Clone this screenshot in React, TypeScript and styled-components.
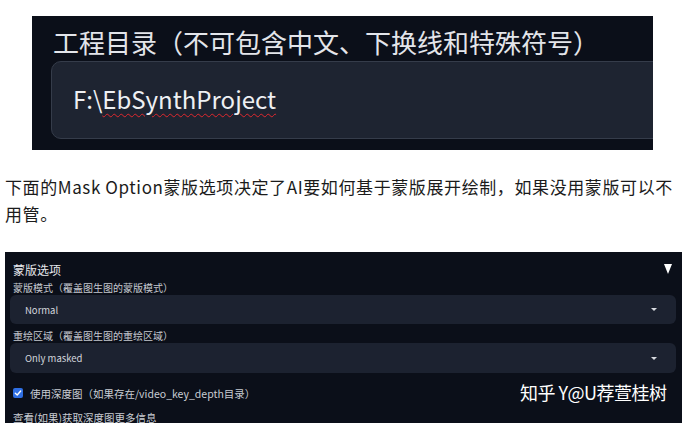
import React from "react";
import styled, { createGlobalStyle } from "styled-components";

const Global = createGlobalStyle`
  html, body { margin: 0; padding: 0; background: #ffffff; overflow: hidden; }
  body { width: 685px; height: 423px; }
`;

const Page = styled.div`
  width: 685px;
  height: 423px;
  overflow: hidden;
  display: flex;
  flex-direction: column;
  font-family: "Noto Sans CJK SC", "Noto Sans", sans-serif;
  & > * { flex-shrink: 0; }
`;

const TopShot = styled.div`
  margin: 16px 0 0 32px;
  width: 621px;
  height: 134px;
  background: #0b0f19;
  overflow: hidden;
  display: flex;
  flex-direction: column;
  padding: 0 0 0 19px;
  box-sizing: border-box;
`;

const BigTitle = styled.div`
  margin-top: 9px;
  color: #e3e5ea;
  font-size: 26px;
  line-height: 34px;
  height: 34px;
  white-space: nowrap;
  padding-left: 2px;
  flex-shrink: 0;
`;

const BigInput = styled.div`
  margin-top: 2px;
  width: 700px;
  height: 78px;
  flex-shrink: 0;
  box-sizing: border-box;
  border: 1px solid #353c4a;
  border-radius: 10px;
  background: #1e2431;
  display: flex;
  align-items: center;
  padding: 0 0 3px 21px;
  color: #eef0f3;
  font-size: 24px;
  white-space: nowrap;
`;

const Squiggle = styled.span`
  text-decoration: underline wavy #e0282e;
  text-decoration-thickness: 1px;
  text-underline-offset: 4px;
`;

const Para = styled.p`
  margin: 23px 0 0 5px;
  width: 680px;
  color: #1b1b1b;
  font-size: 17px;
  line-height: 27px;
  letter-spacing: 0.6px;
  font-family: "Noto Sans CJK SC", sans-serif;
`;

const Panel = styled.div`
  position: relative;
  margin: 25px 0 0 5px;
  width: 677px;
  height: 200px;
  background: #0b0f19;
  box-sizing: border-box;
  padding: 9px 6px 0 5px;
  display: flex;
  flex-direction: column;
  & > * { flex-shrink: 0; }
`;

const HeaderRow = styled.div`
  display: flex;
  align-items: center;
  justify-content: space-between;
  height: 16px;
  padding: 0 4px 0 3px;
  color: #e6e8ec;
  font-size: 12px;
`;

const Caret = styled.span`
  width: 0;
  height: 0;
  border-left: 4.5px solid transparent;
  border-right: 4.5px solid transparent;
  border-top: 10px solid #ffffff;
`;

const Label = styled.div<{ $top: number }>`
  margin-top: ${(p) => p.$top}px;
  padding-left: 3px;
  color: #c4c8cf;
  font-size: 10px;
  line-height: 13px;
  white-space: nowrap;
`;

const Select = styled.div<{ $h: number }>`
  margin-top: 1px;
  height: ${(p) => p.$h}px;
  border-radius: 6px;
  background: #1c2230;
  display: flex;
  align-items: center;
  justify-content: space-between;
  padding: 0 19px 0 15px;
  color: #d3d6dc;
  font-size: 9.5px;
`;

const Chevron = styled.span`
  width: 0;
  height: 0;
  border-left: 3px solid transparent;
  border-right: 3px solid transparent;
  border-top: 3px solid #d8dbe0;
`;

const CheckRow = styled.div`
  margin-top: 12px;
  height: 16px;
  display: flex;
  align-items: center;
  gap: 7px;
  padding-left: 3px;
  color: #c8ccd3;
  font-size: 10.5px;
  white-space: nowrap;
`;

const Box = styled.span`
  width: 10px;
  height: 10px;
  border-radius: 2px;
  background: #2f6fe4;
  display: flex;
  align-items: center;
  justify-content: center;
`;

const CutLine = styled.div`
  margin-top: 10px;
  padding-left: 3px;
  color: #c8ccd3;
  font-size: 10.5px;
  line-height: 14px;
  white-space: nowrap;
`;

const Watermark = styled.div`
  position: absolute;
  left: 515px;
  top: 128px;
  color: #ffffff;
  font-size: 18px;
  line-height: 24px;
  white-space: nowrap;
  font-family: "Noto Sans CJK SC", sans-serif;
  letter-spacing: -0.5px;
`;

export default function App() {
  return (
    <>
      <Global />
      <Page>
        <TopShot>
          <BigTitle>工程目录（不可包含中文、下换线和特殊符号）</BigTitle>
          <BigInput>
            F:\<Squiggle>EbSynthProject</Squiggle>
          </BigInput>
        </TopShot>
        <Para>
          下面的Mask Option蒙版选项决定了AI要如何基于蒙版展开绘制，如果没用蒙版可以不用管。
        </Para>
        <Panel>
          <HeaderRow>
            <span>蒙版选项</span>
            <Caret />
          </HeaderRow>
          <Label $top={4}>蒙版模式（覆盖图生图的蒙版模式）</Label>
          <Select $h={29}>
            <span>Normal</span>
            <Chevron />
          </Select>
          <Label $top={5}>重绘区域（覆盖图生图的重绘区域）</Label>
          <Select $h={30}>
            <span>Only masked</span>
            <Chevron />
          </Select>
          <CheckRow>
            <Box>
              <svg width="8" height="8" viewBox="0 0 8 8">
                <path d="M1.3 4.2 L3.2 6 L6.7 2" fill="none" stroke="#fff" strokeWidth="1.4" strokeLinecap="round" strokeLinejoin="round" />
              </svg>
            </Box>
            <span>使用深度图（如果存在/video_key_depth目录）</span>
          </CheckRow>
          <CutLine>查看(如果)获取深度图更多信息</CutLine>
          <Watermark>知乎 Y@U荐萱桂树</Watermark>
        </Panel>
      </Page>
    </>
  );
}
